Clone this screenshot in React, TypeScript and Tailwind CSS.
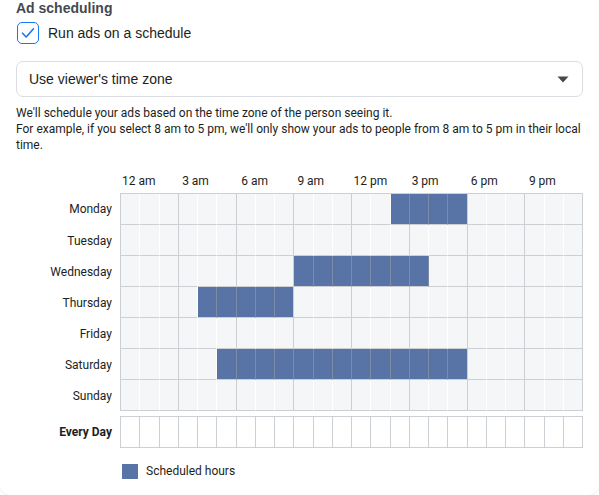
import React from "react";

const DAYS = ["Monday", "Tuesday", "Wednesday", "Thursday", "Friday", "Saturday", "Sunday"];

// Scheduled hour ranges per day, inclusive [start, end] hour indexes.
const SCHEDULE: Record<string, [number, number][]> = {
  Monday: [[14, 17]],
  Wednesday: [[9, 15]],
  Thursday: [[4, 8]],
  Saturday: [[5, 17]],
};

const HOUR_LABELS: { text: string; pad: string }[] = [
  { text: "12 am", pad: "pl-[2px]" },
  { text: "3 am", pad: "pl-[6px]" },
  { text: "6 am", pad: "pl-[5px]" },
  { text: "9 am", pad: "pl-[2px]" },
  { text: "12 pm", pad: "pl-[2px]" },
  { text: "3 pm", pad: "pl-[4px]" },
  { text: "6 pm", pad: "pl-[5px]" },
  { text: "9 pm", pad: "pl-[4px]" },
];

const HOURS = Array.from({ length: 24 }, (_, i) => i);

function isScheduled(day: string, hour: number) {
  return (SCHEDULE[day] ?? []).some(([a, b]) => hour >= a && hour <= b);
}

function DayRow({ day, first }: { day: string; first: boolean }) {
  return (
    <div className="flex items-stretch">
      <div className="w-[104px] shrink-0 pr-[8px] flex items-center justify-end text-[12px] text-[#1c1e21]">
        {day}
      </div>
      <div
        className={`w-[464px] grid grid-cols-[repeat(24,minmax(0,1fr))] border-l border-[#ccd0d5] ${
          first ? "border-t" : ""
        }`}
      >
        {HOURS.map((h) => {
          const on = isScheduled(day, h);
          const groupEnd = (h + 1) % 3 === 0;
          const nextOn = h < 23 && isScheduled(day, h + 1);
          let right = "border-r-white";
          if (groupEnd) right = "border-r-[#ccd0d5]";
          if (on && nextOn) right = "border-r-[#7d8ba5]";
          if (on && !nextOn && !groupEnd) right = "border-r-[#7d8ba5]";
          return (
            <div
              key={h}
              className={`h-[31px] border-r border-b border-b-[#ccd0d5] ${right} ${
                on ? "bg-[#5874a6]" : "bg-[#f5f6f7]"
              }`}
            />
          );
        })}
      </div>
    </div>
  );
}

export default function App() {
  return (
    <div
      className="w-[599px] h-[495px] bg-white px-[16px] text-[#1c1e21] rounded-b-[10px] shadow-[0_1px_2px_rgba(0,0,0,0.08)] overflow-hidden"
      style={{ fontFamily: "Roboto, 'Liberation Sans', Arial, sans-serif" }}
    >
      <div
        className="text-[14px] font-bold leading-[16px] pt-[0px] text-[#444950]"
        style={{ fontFamily: "'Liberation Sans', Arial, sans-serif" }}
      >
        Ad scheduling
      </div>

      <div className="mt-[6px] flex items-center gap-[9px] pl-[1px]">
        <div className="w-[22px] h-[22px] rounded-[5px] border-[1.5px] border-[#1877f2] flex items-center justify-center bg-white">
          <svg width="14" height="12" viewBox="0 0 14 12" fill="none">
            <path d="M1.5 6.2 L5.2 10 L12.5 1.8" stroke="#1877f2" strokeWidth="1.6" strokeLinecap="round" strokeLinejoin="round" />
          </svg>
        </div>
        <span
          className="text-[14px] text-[#1c1e21]"
          style={{ fontFamily: "'Liberation Sans', Arial, sans-serif" }}
        >
          Run ads on a schedule
        </span>
      </div>

      <div className="mt-[17px] h-[36px] border border-[#dadde1] rounded-[7px] flex items-center justify-between pl-[12px] pr-[13px]">
        <span
          className="text-[14px] text-[#1c1e21]"
          style={{ fontFamily: "'Liberation Sans', Arial, sans-serif" }}
        >
          Use viewer's time zone
        </span>
        <svg width="12" height="7" viewBox="0 0 12 7">
          <path d="M0.5 0.5 H11.5 L6 6.5 Z" fill="#444950" />
        </svg>
      </div>

      <div className="mt-[8px] text-[12px] leading-[16px] text-[#1c1e21]">
        <p>We'll schedule your ads based on the time zone of the person seeing it.</p>
        <p>
          For example, if you select 8 am to 5 pm, we'll only show your ads to people from 8 am to 5 pm in their local
          time.
        </p>
      </div>

      <div className="mt-[20px] flex">
        <div className="w-[104px] shrink-0" />
        <div className="w-[464px] flex">
          {HOUR_LABELS.map((l) => (
            <div key={l.text} className={`flex-1 text-[12px] leading-[16px] text-[#1c1e21] ${l.pad}`}>
              {l.text}
            </div>
          ))}
        </div>
      </div>

      <div className="mt-[4px]">
        {DAYS.map((d, i) => (
          <DayRow key={d} day={d} first={i === 0} />
        ))}
      </div>

      <div className="mt-[5px] flex items-stretch">
        <div className="w-[104px] shrink-0 pr-[8px] flex items-center justify-end text-[12px] font-bold text-[#1c1e21]">
          Every Day
        </div>
        <div className="w-[464px] grid grid-cols-[repeat(24,minmax(0,1fr))] border-l border-t border-[#ccd0d5]">
          {HOURS.map((h) => (
            <div key={h} className="h-[31px] border-r border-b border-[#ccd0d5] bg-white" />
          ))}
        </div>
      </div>

      <div className="mt-[14px] flex items-center pl-[106px]">
        <div className="w-[16px] h-[15px] bg-[#5874a6]" />
        <span className="ml-[8px] text-[12px] text-[#1c1e21]">Scheduled hours</span>
      </div>
    </div>
  );
}
